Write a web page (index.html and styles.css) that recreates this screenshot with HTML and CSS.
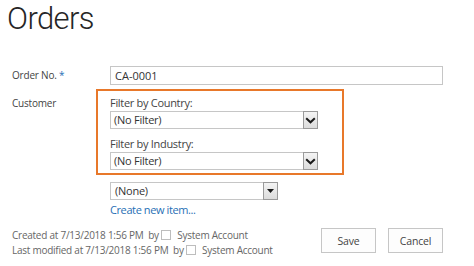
FILE: index.html
```html
<!DOCTYPE html>
<html lang="en">
<head>
<meta charset="utf-8">
<title>Orders</title>
<link rel="stylesheet" href="styles.css">
</head>
<body>
<div class="page">
  <h1 class="title">Orders</h1>
  <div class="form">
    <div class="row row-order">
      <div class="label">Order No. <span class="req">*</span></div>
      <div class="field">
        <div class="textbox">CA-0001</div>
      </div>
    </div>
    <div class="row row-customer">
      <div class="label">Customer</div>
      <div class="field">
        <div class="filters">
          <div class="filter-label">Filter by Country:</div>
          <div class="select select-wide">
            <span class="select-text">(No Filter)</span>
            <span class="select-btn">
              <svg class="chev" width="11" height="7" viewBox="0 0 11 7"><path d="M1.2 1.2 L5.5 5.3 L9.8 1.2" fill="none" stroke="#1a1a1a" stroke-width="2"/></svg>
            </span>
          </div>
          <div class="filter-label">Filter by Industry:</div>
          <div class="select select-wide">
            <span class="select-text">(No Filter)</span>
            <span class="select-btn">
              <svg class="chev" width="11" height="7" viewBox="0 0 11 7"><path d="M1.2 1.2 L5.5 5.3 L9.8 1.2" fill="none" stroke="#1a1a1a" stroke-width="2"/></svg>
            </span>
          </div>
        </div>
        <div class="select select-narrow">
          <span class="select-text">(None)</span>
          <span class="select-btn select-btn-small">
            <svg width="7" height="4" viewBox="0 0 7 4"><path d="M0 0 H7 L3.5 4 Z" fill="#1a1a1a"/></svg>
          </span>
        </div>
        <a class="create-link" href="#">Create new item...</a>
      </div>
    </div>
  </div>
  <div class="footer">
    <div class="meta">
      <div class="meta-line">Created at 7/13/2018 1:56 PM&nbsp; by<span class="pbox"></span> System Account</div>
      <div class="meta-line">Last modified at 7/13/2018 1:56 PM&nbsp; by<span class="pbox"></span> System Account</div>
    </div>
    <div class="buttons">
      <button class="btn" type="button">Save</button>
      <button class="btn" type="button">Cancel</button>
    </div>
  </div>
</div>
</body>
</html>
```
FILE: styles.css
```css
html, body {
  margin: 0;
  padding: 0;
  background: #ffffff;
}
body {
  font-family: "Open Sans", "Noto Sans", sans-serif;
  color: #444444;
  width: 474px;
  height: 266px;
  overflow: hidden;
}
.page {
  padding: 0 31px 0 12px;
}
.title {
  margin: 0 0 0 -5px;
  font-family: Roboto, "Open Sans", sans-serif;
  font-size: 31px;
  font-weight: 300;
  color: #262626;
  line-height: normal;
  letter-spacing: -0.6px;
}
.form {
  margin-top: 29px;
  font-size: 11px;
}
.row {
  display: grid;
  grid-template-columns: 98px 1fr;
}
.label {
  color: #444444;
  line-height: 15px;
  font-size: 10px;
  letter-spacing: -0.2px;
}
.req {
  color: #1f6fb5;
}
.row-order .label {
  padding-top: 2px;
}
.textbox {
  width: 333px;
  height: 19px;
  box-sizing: border-box;
  border: 1px solid #c6c6c6;
  padding: 0 4px;
  line-height: 17px;
  color: #333333;
}
.row-customer {
  margin-top: 4px;
}
.row-customer .label {
  padding-top: 7px;
}
.filters {
  margin-left: -14px;
  width: 248px;
  box-sizing: border-box;
  border: 2px solid #e8782a;
  padding: 3px 0 3px 12px;
}
.filter-label {
  line-height: 15px;
  padding-top: 1px;
  color: #444444;
  letter-spacing: -0.3px;
}
.filter-label + .select {
  margin-top: 1px;
}
.select + .filter-label {
  margin-top: 6px;
}
.select {
  display: flex;
  align-items: stretch;
  box-sizing: border-box;
  height: 18px;
  border: 1px solid #c6c6c6;
  border-right: none;
  color: #333333;
  letter-spacing: -0.25px;
}
.select-wide {
  width: 208px;
}
.select-narrow {
  width: 168px;
  margin-top: 7px;
}
.select-text {
  flex: 1;
  padding-left: 3px;
  line-height: 16px;
}
.select-narrow .select-text {
  padding-left: 4px;
}
.select-btn {
  width: 15px;
  margin: -1px 0;
  box-sizing: border-box;
  border: 1px solid #9a9a9a;
  background: linear-gradient(#f4f4f4, #dcdcdc);
  display: flex;
  align-items: center;
  justify-content: center;
}
.create-link {
  display: block;
  margin-top: 2px;
  color: #1f6fb5;
  text-decoration: none;
  line-height: 15px;
  letter-spacing: -0.4px;
}
.footer {
  display: flex;
  justify-content: space-between;
  align-items: flex-start;
  margin-top: 10px;
  font-size: 10px;
}
.meta {
  color: #666666;
  padding-top: 1px;
  letter-spacing: -0.25px;
}
.meta-line {
  line-height: 15px;
}
.pbox {
  display: inline-block;
  width: 8px;
  height: 8px;
  border: 1px solid #bdbdbd;
  margin: 0 4px 0 2px;
  vertical-align: -1px;
}
.buttons {
  display: flex;
  gap: 12px;
  padding-top: 1px;
}
.btn {
  width: 55px;
  height: 25px;
  box-sizing: border-box;
  border: 1px solid #c6c6c6;
  background: #fdfdfd;
  font-family: inherit;
  font-size: 10.5px;
  letter-spacing: -0.2px;
  color: #444444;
  padding: 0;
}
```
